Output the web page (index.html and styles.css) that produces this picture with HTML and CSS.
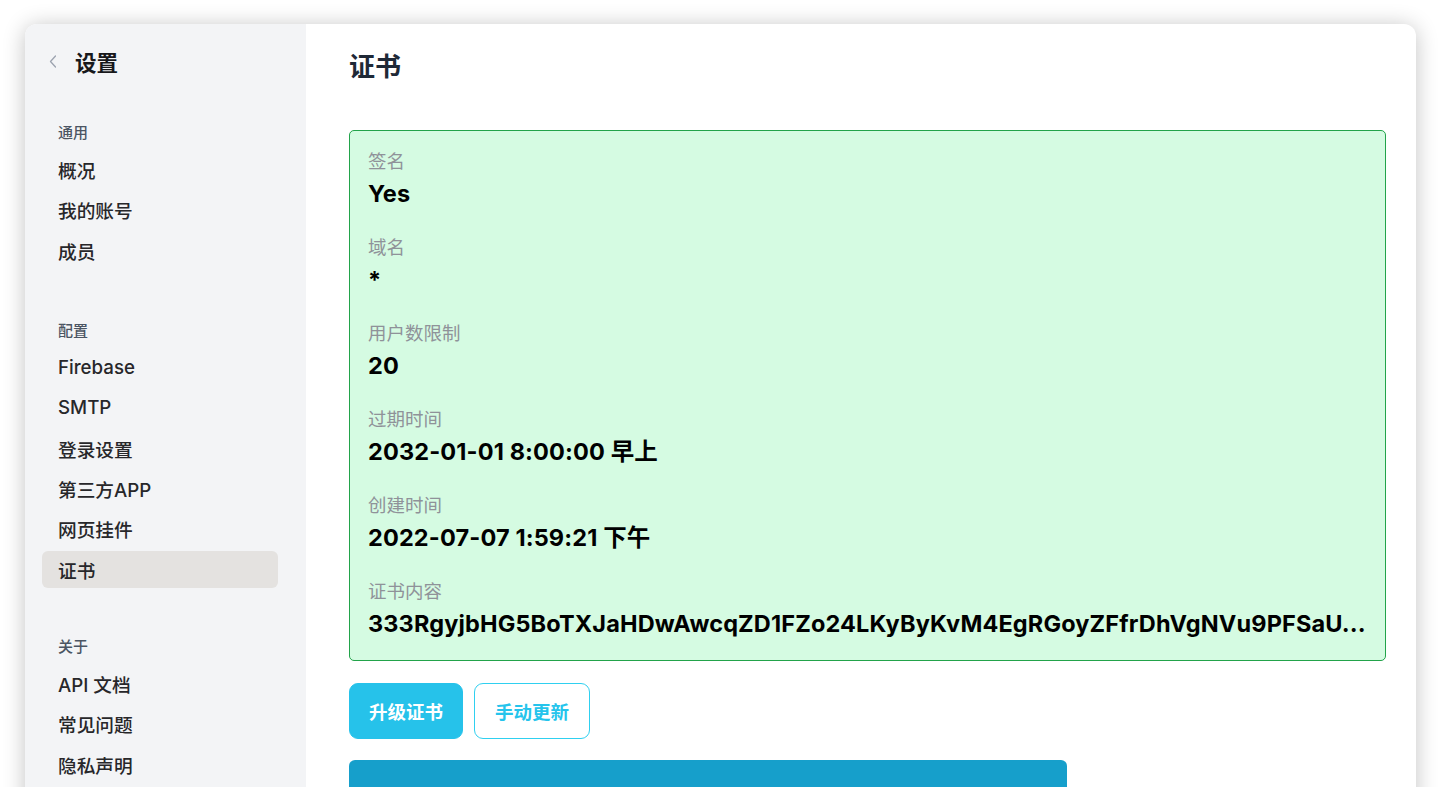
FILE: index.html
```html
<!DOCTYPE html>
<html lang="zh-CN">
<head>
    <meta charset="UTF-8">
    <meta name="viewport" content="width=device-width, initial-scale=1.0">
    <title>证书 - 设置</title>
    <link rel="stylesheet" href="styles.css">
</head>
<body>
    <div class="window">
        <!-- Sidebar -->
        <aside class="sidebar">
            <div class="side-header">
                <svg class="back" width="8" height="13" viewBox="0 0 8 13">
                    <path d="M6.5 1 L1.5 6.5 L6.5 12" fill="none" stroke="#9ca3af" stroke-width="1.3" stroke-linecap="round" stroke-linejoin="round"/>
                </svg>
                <span class="side-title">设置</span>
            </div>

            <div class="section first">
                <div class="section-label">通用</div>
                <a class="nav-item">概况</a>
                <a class="nav-item">我的账号</a>
                <a class="nav-item">成员</a>
            </div>

            <div class="section">
                <div class="section-label">配置</div>
                <a class="nav-item">Firebase</a>
                <a class="nav-item">SMTP</a>
                <a class="nav-item">登录设置</a>
                <a class="nav-item">第三方APP</a>
                <a class="nav-item">网页挂件</a>
                <a class="nav-item active">证书</a>
            </div>

            <div class="section last">
                <div class="section-label">关于</div>
                <a class="nav-item">API 文档</a>
                <a class="nav-item">常见问题</a>
                <a class="nav-item">隐私声明</a>
            </div>
        </aside>

        <!-- Main -->
        <main class="main">
            <h1 class="page-title">证书</h1>

            <div class="cert-box">
                <div class="field">
                    <div class="field-label">签名</div>
                    <div class="field-value">Yes</div>
                </div>
                <div class="field">
                    <div class="field-label">域名</div>
                    <div class="field-value">*</div>
                </div>
                <div class="field">
                    <div class="field-label">用户数限制</div>
                    <div class="field-value">20</div>
                </div>
                <div class="field">
                    <div class="field-label">过期时间</div>
                    <div class="field-value">2032-01-01 8:00:00 早上</div>
                </div>
                <div class="field">
                    <div class="field-label">创建时间</div>
                    <div class="field-value">2022-07-07 1:59:21 下午</div>
                </div>
                <div class="field">
                    <div class="field-label">证书内容</div>
                    <div class="field-value">333RgyjbHG5BoTXJaHDwAwcqZD1FZo24LKyByKvM4EgRGoyZFfrDhVgNVu9PFSaU...</div>
                </div>
            </div>

            <div class="actions">
                <button class="btn btn-primary">升级证书</button>
                <button class="btn btn-outline">手动更新</button>
            </div>

            <div class="banner"></div>
        </main>
    </div>
</body>
</html>
```

FILE: styles.css
```css
html, body {
    margin: 0;
    padding: 0;
    height: 100%;
    overflow: hidden;
}

body {
    background-color: #fff;
    font-family: 'Inter', 'Noto Sans CJK SC', sans-serif;
    color: #27272a;
}

.window {
    display: flex;
    margin: 24px 24px 0 25px;
    height: 820px;
    border-radius: 12px;
    background-color: #fff;
    box-shadow: 0 2px 22px rgba(0, 0, 0, 0.24);
    overflow: hidden;
}

/* Sidebar */
.sidebar {
    width: 281px;
    flex-shrink: 0;
    box-sizing: border-box;
    background-color: #f3f4f6;
    padding: 17px 28px 0 17px;
}

.side-header {
    display: flex;
    align-items: center;
    height: 40px;
}

.back {
    margin-left: 7px;
    margin-right: 18px;
}

.side-title {
    font-size: 21.5px;
    font-weight: 700;
    color: #18181b;
}

.section {
    margin-top: 52px;
}

.section.first {
    margin-top: 42px;
}

.section.last {
    margin-top: 49px;
}

.section-label {
    font-size: 15px;
    line-height: 20px;
    font-weight: 500;
    color: #4b5563;
    padding-left: 16px;
    margin-bottom: 8px;
}

.nav-item {
    display: flex;
    align-items: center;
    height: 37px;
    margin-top: 3.4px;
    padding-left: 16px;
    border-radius: 6px;
    font-size: 18.7px;
    font-weight: 500;
    color: #27272a;
    cursor: pointer;
}

.nav-item.active {
    background-color: #e4e2e0;
}

/* Main */
.main {
    flex: 1;
    min-width: 0;
    padding: 28px 30px 0 43px;
}

.page-title {
    margin: 0 0 48px;
    font-size: 26px;
    line-height: 30px;
    font-weight: 700;
    color: #1f2937;
}

.cert-box {
    background-color: #d5fbe2;
    border: 1px solid #22a34a;
    border-radius: 5px;
    padding: 18px 18px 20px 18px;
}

.field {
    margin-top: 25px;
}

.field:first-child {
    margin-top: 0;
}

.field-label {
    font-size: 18.5px;
    line-height: 24px;
    color: #8f9299;
}

.field-value {
    margin-top: 5px;
    font-size: 23.5px;
    line-height: 32px;
    font-weight: 700;
    letter-spacing: 0.14px;
    color: #000;
    white-space: nowrap;
}

.actions {
    display: flex;
    gap: 11px;
    margin-top: 22px;
}

.btn {
    height: 56px;
    padding: 0 19px;
    font-family: inherit;
    font-size: 18.5px;
    font-weight: 700;
    border-radius: 9px;
    cursor: pointer;
}

.btn-primary {
    background-color: #26c2ea;
    border: 1px solid #26c2ea;
    color: #fff;
}

.btn-outline {
    padding: 0 20px;
    background-color: #fff;
    border: 1px solid #2fd0f0;
    color: #25c4ec;
}

.banner {
    width: 718px;
    height: 60px;
    margin-top: 21px;
    background-color: #169fcb;
    border-radius: 6px 6px 0 0;
}
```
